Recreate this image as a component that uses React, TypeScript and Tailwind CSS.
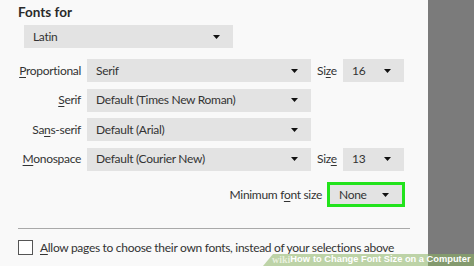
const ui = "font-['Lato',sans-serif]";

function Arrow() {
  return (
    <svg width="7" height="4" viewBox="0 0 7 4" className="shrink-0">
      <path d="M0 0h7L3.5 4z" fill="#111" />
    </svg>
  );
}

function Select({ value, className }: { value: string; className: string }) {
  return (
    <div
      className={`flex items-center justify-between bg-[#e3e3e3] pl-[9px] pr-[13px] text-[12px] tracking-[-0.3px] text-[#333] ${className}`}
    >
      <span className="whitespace-nowrap">{value}</span>
      <Arrow />
    </div>
  );
}

function Key({ text, at }: { text: string; at: number }) {
  return (
    <span className="whitespace-nowrap">
      {text.slice(0, at)}
      <span className="underline underline-offset-2">{text[at]}</span>
      {text.slice(at + 1)}
    </span>
  );
}

const rows = [
  { label: "Proportional", at: 0, value: "Serif", size: "16", sizeAt: 2 },
  { label: "Serif", at: 0, value: "Default (Times New Roman)" },
  { label: "Sans-serif", at: 2, value: "Default (Arial)" },
  { label: "Monospace", at: 0, value: "Default (Courier New)", size: "13", sizeAt: 3 },
];

export default function App() {
  return (
    <div className={`relative flex h-[266px] w-[474px] overflow-hidden bg-[#f9f9f9] ${ui}`}>
      <div className="flex w-[428px] shrink-0 flex-col pl-[18px] text-[12px] tracking-[-0.3px] text-[#333]">
        <div className="pt-[2px] text-[13.5px] font-bold tracking-normal text-[#2a2a2a]">Fonts for</div>
        <Select value="Latin" className="ml-[6px] mt-[3px] h-[23px] w-[209px]" />

        <div className="mt-[11px] flex flex-col gap-[6.5px]">
          {rows.map((r) => (
            <div key={r.label} className="flex h-[23px] items-center">
              <div className="w-[63px] text-right">
                <Key text={r.label} at={r.at} />
              </div>
              <Select value={r.value} className="ml-[6px] h-full w-[224px]" />
              {r.size && (
                <>
                  <div className="ml-[6px] w-[26px]">
                    <Key text="Size" at={r.sizeAt!} />
                  </div>
                  <Select value={r.size} className="h-full w-[61px]" />
                </>
              )}
            </div>
          ))}
        </div>

        <div className="mt-[11.5px] flex h-[25px] items-center justify-end pr-[23px]">
          <Key text="Minimum font size" at={9} />
          <div className="ml-[5px] h-full w-[78px] border-[3px] border-[#22e31c]">
            <Select value="None" className="h-full w-full pr-[10px]" />
          </div>
        </div>

        <div className="mr-[18px] mt-[21px] h-px bg-[#a9a9a9]" />

        <div className="mt-[9.5px] flex items-center">
          <div className="h-[15px] w-[15px] shrink-0 border border-[#555] bg-white" />
          <span className="ml-[7px]">
            <Key text="Allow pages to choose their own fonts, instead of your selections above" at={0} />
          </span>
        </div>
      </div>
      <div className="flex-1 bg-[#7b7b7b]" />

      <div className="absolute bottom-0 right-0 flex h-[12px] w-[211px] items-center overflow-hidden whitespace-nowrap bg-[rgba(140,180,100,0.55)] pl-[9px] [clip-path:polygon(10px_0,100%_0,100%_100%,0_100%)] font-['Liberation_Sans',sans-serif] text-[9.3px] font-bold leading-none text-white">
        <span className="font-['Liberation_Serif',serif] text-[10px] text-[#e8f0dc]">wiki</span>
        <span>How</span>
        <span className="ml-[3px]">to Change Font Size on a Computer</span>
      </div>
    </div>
  );
}
